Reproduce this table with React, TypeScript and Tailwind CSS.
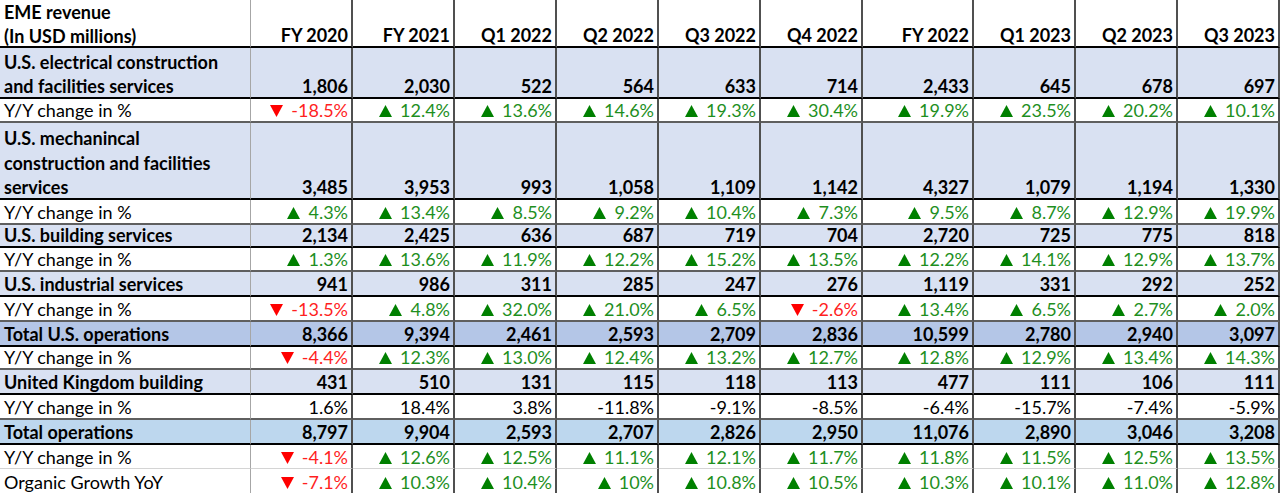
import type { ReactNode } from 'react';

// EME revenue table, laid out like the Excel sheet
const headers = ['FY 2020', 'FY 2021', 'Q1 2022', 'Q2 2022', 'Q3 2022', 'Q4 2022', 'FY 2022', 'Q1 2023', 'Q2 2023', 'Q3 2023'];

type Kind = 'cat' | 'totalUs' | 'total' | 'yoy' | 'plain';
type Bottom = 'black' | 'gray' | 'light' | 'none';

type Row = {
  label: string[];
  kind: Kind;
  values: string[];
  height: string;
  bottom: Bottom;
};

const rows: Row[] = [
  {
    label: ['U.S. electrical construction', 'and facilities services'],
    kind: 'cat',
    values: ['1,806', '2,030', '522', '564', '633', '714', '2,433', '645', '678', '697'],
    height: 'h-[51px]',
    bottom: 'black',
  },
  {
    label: ['Y/Y change in %'],
    kind: 'yoy',
    values: ['-18.5%', '12.4%', '13.6%', '14.6%', '19.3%', '30.4%', '19.9%', '23.5%', '20.2%', '10.1%'],
    height: 'h-[24px]',
    bottom: 'gray',
  },
  {
    label: ['U.S. mechanincal', 'construction and facilities', 'services'],
    kind: 'cat',
    values: ['3,485', '3,953', '993', '1,058', '1,109', '1,142', '4,327', '1,079', '1,194', '1,330'],
    height: 'h-[77px]',
    bottom: 'black',
  },
  {
    label: ['Y/Y change in %'],
    kind: 'yoy',
    values: ['4.3%', '13.4%', '8.5%', '9.2%', '10.4%', '7.3%', '9.5%', '8.7%', '12.9%', '19.9%'],
    height: 'h-[25px]',
    bottom: 'gray',
  },
  {
    label: ['U.S. building services'],
    kind: 'cat',
    values: ['2,134', '2,425', '636', '687', '719', '704', '2,720', '725', '775', '818'],
    height: 'h-[23px]',
    bottom: 'black',
  },
  {
    label: ['Y/Y change in %'],
    kind: 'yoy',
    values: ['1.3%', '13.6%', '11.9%', '12.2%', '15.2%', '13.5%', '12.2%', '14.1%', '12.9%', '13.7%'],
    height: 'h-[24px]',
    bottom: 'gray',
  },
  {
    label: ['U.S. industrial services'],
    kind: 'cat',
    values: ['941', '986', '311', '285', '247', '276', '1,119', '331', '292', '252'],
    height: 'h-[25px]',
    bottom: 'black',
  },
  {
    label: ['Y/Y change in %'],
    kind: 'yoy',
    values: ['-13.5%', '4.8%', '32.0%', '21.0%', '6.5%', '-2.6%', '13.4%', '6.5%', '2.7%', '2.0%'],
    height: 'h-[25px]',
    bottom: 'gray',
  },
  {
    label: ['Total U.S. operations'],
    kind: 'totalUs',
    values: ['8,366', '9,394', '2,461', '2,593', '2,709', '2,836', '10,599', '2,780', '2,940', '3,097'],
    height: 'h-[25px]',
    bottom: 'black',
  },
  {
    label: ['Y/Y change in %'],
    kind: 'yoy',
    values: ['-4.4%', '12.3%', '13.0%', '12.4%', '13.2%', '12.7%', '12.8%', '12.9%', '13.4%', '14.3%'],
    height: 'h-[23px]',
    bottom: 'gray',
  },
  {
    label: ['United Kingdom building'],
    kind: 'cat',
    values: ['431', '510', '131', '115', '118', '113', '477', '111', '106', '111'],
    height: 'h-[25px]',
    bottom: 'black',
  },
  {
    label: ['Y/Y change in %'],
    kind: 'plain',
    values: ['1.6%', '18.4%', '3.8%', '-11.8%', '-9.1%', '-8.5%', '-6.4%', '-15.7%', '-7.4%', '-5.9%'],
    height: 'h-[25px]',
    bottom: 'gray',
  },
  {
    label: ['Total operations'],
    kind: 'total',
    values: ['8,797', '9,904', '2,593', '2,707', '2,826', '2,950', '11,076', '2,890', '3,046', '3,208'],
    height: 'h-[25px]',
    bottom: 'black',
  },
  {
    label: ['Y/Y change in %'],
    kind: 'yoy',
    values: ['-4.1%', '12.6%', '12.5%', '11.1%', '12.1%', '11.7%', '11.8%', '11.5%', '12.5%', '13.5%'],
    height: 'h-[24px]',
    bottom: 'light',
  },
  {
    label: ['Organic Growth YoY'],
    kind: 'yoy',
    values: ['-7.1%', '10.3%', '10.4%', '10%', '10.8%', '10.5%', '10.3%', '10.1%', '11.0%', '12.8%'],
    height: 'h-[24px]',
    bottom: 'none',
  },
];

const bgFor: Record<Kind, string> = {
  cat: 'bg-[#d9e1f2]',
  totalUs: 'bg-[#b4c6e7]',
  total: 'bg-[#bdd7ee]',
  yoy: 'bg-white',
  plain: 'bg-white',
};

const bottomFor: Record<Bottom, string> = {
  black: 'border-b-2 border-b-black',
  gray: 'border-b-2 border-b-[#5f5f5f]',
  light: 'border-b border-b-[#d4d4d4]',
  none: '',
};

function Triangle({ up }: { up: boolean }) {
  return (
    <svg width="13" height="12" viewBox="0 0 13 12" className="mr-[8px] shrink-0">
      {up ? (
        <polygon points="6.5,0 13,12 0,12" fill="#008000" />
      ) : (
        <polygon points="0,0 13,0 6.5,12" fill="#ff0000" />
      )}
    </svg>
  );
}

function Cell({
  children,
  className,
  first,
}: {
  children: ReactNode;
  className: string;
  first?: boolean;
}) {
  return (
    <div
      className={`flex items-end overflow-hidden ${
        first ? 'border-r border-r-[#a6a6a6] pl-[4px]' : 'justify-end border-r-2 border-r-[#505050] pr-[3px]'
      } ${className}`}
    >
      {children}
    </div>
  );
}

function ValueCell({ row, value, last }: { row: Row; value: string; last: boolean }) {
  const base = `${row.height} ${bgFor[row.kind]} ${bottomFor[row.bottom]} ${last ? 'border-r-0' : ''}`;
  if (row.kind === 'yoy') {
    const down = value.startsWith('-');
    return (
      <Cell className={base}>
        <div className="flex items-baseline leading-[22px]">
          <Triangle up={!down} />
          <span className={down ? 'text-[#ff1f1f]' : 'text-[#1e8f1e]'}>{value}</span>
        </div>
      </Cell>
    );
  }
  if (row.kind === 'plain') {
    return (
      <Cell className={base}>
        <span className="leading-[22px] text-black">{value}</span>
      </Cell>
    );
  }
  return (
    <Cell className={base}>
      <span className="font-bold leading-[22px] text-black">{value}</span>
    </Cell>
  );
}

export default function App() {
  return (
    <div className="h-[493px] w-[1280px] overflow-hidden bg-white font-['Lato','Liberation_Sans',sans-serif] text-[18px] leading-[25px] text-black">
      <div className="grid grid-cols-[251px_102px_102px_102px_102px_102px_102px_111px_102px_102px_102px]">
        {/* Header */}
        <Cell first className="h-[48px] items-start border-b-2 border-b-black bg-white leading-[24px]">
          <div className="font-bold">
            EME revenue
            <br />
            (In USD millions)
          </div>
        </Cell>
        {headers.map((h, i) => (
          <Cell
            key={h}
            className={`h-[48px] border-b-2 border-b-black bg-white font-bold ${i === headers.length - 1 ? 'border-r-0' : ''}`}
          >
            <span className="leading-[22px]">{h}</span>
          </Cell>
        ))}

        {/* Body rows */}
        {rows.map((row, r) => (
          <div key={r} className="contents">
            <Cell first className={`${row.height} ${bgFor[row.kind]} ${bottomFor[row.bottom]}`}>
              <div className={`leading-[25px] ${row.kind === 'yoy' || row.kind === 'plain' ? '' : 'font-bold'}`}>
                {row.label.map((line, j) => (
                  <div key={j} className={j === row.label.length - 1 ? 'leading-[22px]' : ''}>
                    {line}
                  </div>
                ))}
              </div>
            </Cell>
            {row.values.map((v, i) => (
              <ValueCell key={i} row={row} value={v} last={i === row.values.length - 1} />
            ))}
          </div>
        ))}
      </div>
    </div>
  );
}
